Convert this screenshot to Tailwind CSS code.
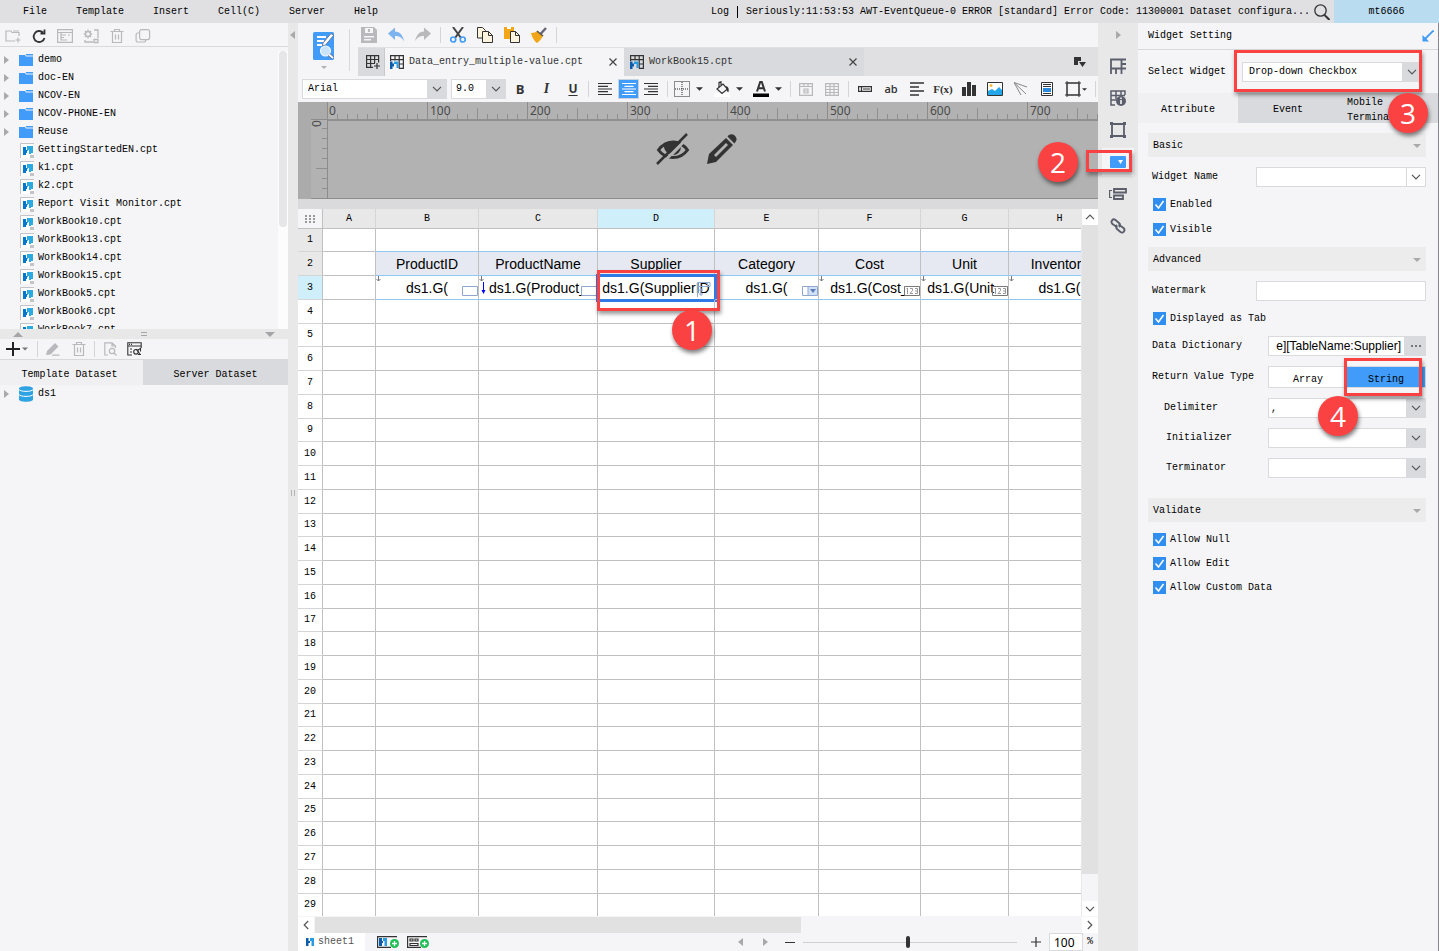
<!DOCTYPE html>
<html lang="en">
<head>
    <meta charset="UTF-8">
    <meta name="viewport" content="width=device-width, initial-scale=1.0">
    <title>Report Designer</title>
    <script src="https://cdn.jsdelivr.net/npm/@tailwindcss/browser@4"></script>
</head>
<body class="h-screen flex flex-col overflow-hidden bg-[#f5f5f7] text-black text-[10px] leading-[18px] font-['Liberation_Mono',monospace]">

    <!-- Shared icons -->
    <svg class="hidden">
        <symbol id="i-cpt" viewBox="0 0 14 15">
            <path d="M0 0h14v15H0z" fill="#fff"/><path d="M.5 15V.5H14" fill="none" stroke="#c4c4c8"/><path d="M10 12h4v3h-4z" fill="#c4c4c8"/>
            <path d="M3 4h3v3h1v3H6v2H3z" fill="#0077cc"/><path d="M7 3h6v7h-2v1H9V7H8v1H7z" fill="#2ba9e1"/>
        </symbol>
        <symbol id="i-grid" viewBox="0 0 14 14">
            <path d="M.6 6V.6h12.800v12.800H9M.6 4.600h12.800M5 .6v5M9.200.6v12.800M9 9h4" fill="none" stroke="#333" stroke-width="1.200"/>
            <path d="M0 6.500h2.500v2H4v3H2.500V14H0z" fill="#0b5cab"/><path d="M4 6.500h4.500V13H6.500V9H4z" fill="#2b9be1"/>
        </symbol>
        <symbol id="i-folder" viewBox="0 0 14 12">
            <path d="M0 1h6l1 1.500h7V12H0z" fill="#419bf9"/><path d="M6.500 0H14v1.500H7.500z" fill="#419bf9"/>
        </symbol>
        <symbol id="i-trash" viewBox="0 0 14 14">
            <path d="M.5 2.500h13M4.500 2.500v-2h5v2M2.500 2.500v11h9v-11M5.500 5.500v5M8.500 5.500v5" fill="none" stroke="#b9b9bd" stroke-width="1.200"/>
        </symbol>
        <symbol id="i-chev" viewBox="0 0 10 6"><path d="M1 .8l4 4 4-4" fill="none" stroke="#555" stroke-width="1.200"/></symbol>
        <symbol id="i-down" viewBox="0 0 8 4"><path d="M0 0h8L4 4z" fill="currentColor"/></symbol>
        <symbol id="i-x" viewBox="0 0 8 8"><path d="M.5.5l7 7M7.500.5l-7 7" stroke="#444" stroke-width="1.200"/></symbol>
        <symbol id="i-right" viewBox="0 0 5 8"><path d="M0 0v8l5-4z" fill="#a9a9ac"/></symbol>
    </svg>

    <!-- Menu bar -->
    <header class="h-[23px] shrink-0 flex items-center bg-[#e0e0e2]">
        <nav class="flex gap-[29px] pl-[23px] whitespace-nowrap">
            <button>File</button>
            <button>Template</button>
            <button>Insert</button>
            <button>Cell(C)</button>
            <button>Server</button>
            <button>Help</button>
        </nav>
        <div class="ml-auto flex items-center whitespace-nowrap">
            <span>Log</span>
            <span class="w-px h-3 bg-black mx-2"></span>
            <span>Seriously:11:53:53 AWT-EventQueue-0 ERROR [standard] Error Code: 11300001 Dataset configura...</span>
        </div>
        <button aria-label="Search" class="ml-1 mr-1"><svg class="w-4 h-4" viewBox="0 0 16 16"><circle cx="6.500" cy="6.500" r="5.700" fill="none" stroke="#333" stroke-width="1.300"/><path d="M10.500 11l5 5" stroke="#333" stroke-width="2"/></svg></button>
        <button class="w-[105px] h-full bg-[#b9dcf1]">mt6666</button>
    </header>

    <div class="flex-1 min-h-0 flex">

        <!-- Left: files and datasets -->
        <aside class="w-72 shrink-0 flex flex-col">
            <div class="h-6 shrink-0 flex items-center gap-[10px] pl-[5px] pt-[2px] border-b border-[#d9d9dc]">
                <button aria-label="New folder"><svg class="w-4 h-4" viewBox="0 0 16 16" fill="none" stroke="#b9b9bd" stroke-width="1.200"><path d="M10 13H1V3h5l1 1.500h7V8M8 3h6M13 9.500v5M10.500 12h5"/></svg></button>
                <button aria-label="Refresh"><svg class="w-4 h-4" viewBox="0 0 16 16" fill="none" stroke="#333" stroke-width="1.800"><path d="M12 4.500A5.500 5.500 0 1 0 13.500 10M13.500 1.500v4H9.500"/></svg></button>
                <button aria-label="Rename"><svg class="w-4 h-4" viewBox="0 0 16 16" fill="none" stroke="#b9b9bd" stroke-width="1.200"><path d="M.6 1.600h14.800v12.800H.6zM.6 4.500h14.800M4 4.500v7.500h6M4 7h5M4 9.500h3M11 7h2"/></svg></button>
                <button aria-label="Settings"><svg class="w-4 h-4" viewBox="0 0 16 16" fill="none" stroke="#b9b9bd" stroke-width="1.300"><circle cx="5" cy="6" r="2.500"/><path d="M5 1.500v2M5 8.500v2M.8 6h2M7.200 6h2M2 3l1.500 1.500M8 3L6.500 4.500M2 9l1.500-1.500M8 9L6.500 7.500M11 2h4v8M2 12v2h8M11 11.500h4v3h-4z"/></svg></button>
                <button aria-label="Delete"><svg class="w-4 h-[14px]"><use href="#i-trash"/></svg></button>
                <button aria-label="Copy"><svg class="w-4 h-4" viewBox="0 0 16 16" fill="none" stroke="#b9b9bd" stroke-width="1.200"><rect x="4.600" y="1.600" width="10" height="10" rx="2"/><path d="M4 5H2.600a1.500 1.500 0 0 0-1.500 1.500v6A1.500 1.500 0 0 0 2.600 14h6.500a1.500 1.500 0 0 0 1.500-1.500V12"/></svg></button>
            </div>

            <div class="h-[282px] shrink-0 flex overflow-hidden">
                <ul id="files" class="flex-1 pt-1 pl-1"></ul>
                <div class="w-[10px] bg-[#fcfcfd] mt-1 px-px"><div class="h-44 rounded bg-[#e6e6e8]"></div></div>
            </div>

            <div class="h-[10px] shrink-0 bg-[#e8e8e8] flex items-center justify-between px-[13px] text-[#a5a5a8]">
                <svg class="w-[10px] h-[5px] rotate-180"><use href="#i-down"/></svg>
                <span class="w-[6px] h-1 border-y border-[#a5a5a8]"></span>
                <svg class="w-[10px] h-[5px]"><use href="#i-down"/></svg>
            </div>

            <div class="h-[21px] shrink-0 flex items-center border-b border-[#d9d9dc] pl-[6px] text-[#777]">
                <button aria-label="Add dataset" class="flex items-center gap-[2px]"><svg class="w-[14px] h-[14px]" viewBox="0 0 14 14"><path d="M7 0v14M0 7h14" stroke="#222" stroke-width="2"/></svg><svg class="w-[6px] h-1"><use href="#i-down"/></svg></button>
                <span class="w-px h-4 bg-[#d5d5d8] ml-[9px] mr-2"></span>
                <button aria-label="Edit"><svg class="w-[14px] h-[14px]" viewBox="0 0 14 14"><path d="M0 13l1-4 8-8 3.500 3.500-8 8zM6 12.500h7.500v1.200H6z" fill="#b9b9bd"/></svg></button>
                <button aria-label="Delete dataset" class="ml-3"><svg class="w-[14px] h-[14px]"><use href="#i-trash"/></svg></button>
                <span class="w-px h-4 bg-[#d5d5d8] ml-2 mr-[9px]"></span>
                <button aria-label="Preview"><svg class="w-[14px] h-[14px]" viewBox="0 0 14 14" fill="none" stroke="#b9b9bd" stroke-width="1.200"><path d="M4 13H.8V.8H8L11.500 4v2M8 .8V4h3.500"/><circle cx="8" cy="9" r="2.700"/><path d="M10 11l2.500 2.500"/></svg></button>
                <button aria-label="Connections" class="ml-[9px]"><svg class="w-[15px] h-[14px]" viewBox="0 0 15 14" fill="none" stroke="#333" stroke-width="1.100"><path d="M5 13H.8V.8h13.400V6M.8 4h13.400M3 7h2M3 10h2M2 2.400h1M4 2.400h1"/><circle cx="9" cy="9.800" r="2.300"/><path d="M9 7l4 5M11 8l2.500-1.500v3M11 12.500h3"/></svg></button>
            </div>
            <div class="h-[25px] shrink-0 flex">
                <button class="w-[143px] pt-1 bg-[#f0f0f2] pr-1">Template Dataset</button>
                <button class="flex-1 pt-1 bg-[#d9dadd]">Server Dataset</button>
            </div>
            <div class="h-[18px] flex items-center pl-1">
                <svg class="w-[5px] h-2"><use href="#i-right"/></svg>
                <svg class="w-[14px] h-4 ml-[10px] mr-[5px]" viewBox="0 0 14 16"><path d="M0 2.500C0-.5 14-.5 14 2.500v11c0 3-14 3-14 0z" fill="#2ea3e3"/><path d="M0 3.500c1 2.500 13 2.500 14 0M0 8.500c1 2.500 13 2.500 14 0" fill="none" stroke="#fff"/></svg>
                ds1
            </div>
        </aside>

        <div class="w-[10px] shrink-0 bg-[#e8e8e8] flex flex-col items-center pt-2 pr-px">
            <svg class="w-[5px] h-2 rotate-180"><use href="#i-right"/></svg>
            <span class="w-1 h-[6px] mt-[451px] border-x border-[#b5b5b8]"></span>
        </div>

        <!-- Centre: designer -->
        <main class="flex-1 min-w-0 flex flex-col relative">
            <div class="flex h-[53px] shrink-0">
                <div class="w-[60px] flex items-center">
                    <button aria-label="Preview report" class="w-[51px] flex flex-col items-center gap-[6px] text-[#b0b0b3]">
                        <svg class="w-[22px] h-[29px]" viewBox="0 0 22 29"><rect y="1" width="21" height="28" rx="1.500" fill="#419bf9"/><path d="M4 6h9M4 10h7M4 14h5" stroke="#fff" stroke-width="1.800"/><path d="M10 12l8-9.500 2.500 2-8 9.500-3 1z" fill="#fff" stroke="#667" stroke-width=".8"/><circle cx="12.500" cy="20" r="5" fill="#c9e3fb" stroke="#eef6fe" stroke-width="1.200"/><path d="M16 23.500l4 3.500" stroke="#667" stroke-width="3"/><path d="M16 23.500l4 3.500" stroke="#fff" stroke-width="1.800"/></svg>
                        <svg class="w-[6px] h-[3px]"><use href="#i-down"/></svg>
                    </button>
                    <span class="w-px h-[42px] bg-[#d9d9dc]"></span>
                </div>
                <div class="flex-1 min-w-0 flex flex-col">
                    <div class="h-[25px] flex items-center gap-[11px] pl-[3px] border-b border-[#dfe0e2]">
                        <button aria-label="Save"><svg class="w-4 h-4" viewBox="0 0 16 16"><path d="M0 0h13l3 3v13H0z" fill="#b9b9bd"/><path d="M4 1h8v5H4zM3 9h10v1.500H3zM3 12h7v1.500H3z" fill="#f5f5f7"/><path d="M7 2h2v3H7z" fill="#b9b9bd"/></svg></button>
                        <button aria-label="Undo"><svg class="w-4 h-4" viewBox="0 0 16 16"><path d="M7 .5v4c5 0 8 4 9 10-2-4-4.500-5.500-9-5.500v4L0 6.500z" fill="#7db3ee"/></svg></button>
                        <button aria-label="Redo"><svg class="w-4 h-4" viewBox="0 0 16 16"><path d="M9 .5v4c-5 0-8 4-9 10 2-4 4.500-5.500 9-5.500v4l7-6.500z" fill="#b9b9bd"/></svg></button>
                        <span class="w-px h-4 -mx-[2px] bg-[#d5d5d8]"></span>
                        <button aria-label="Cut"><svg class="w-4 h-4" viewBox="0 0 16 16" fill="none"><path d="M3 0l8 11M13 0L5 11" stroke="#444" stroke-width="2"/><circle cx="3.200" cy="12.500" r="2.500" stroke="#419bf9" stroke-width="1.700"/><circle cx="12.800" cy="12.500" r="2.500" stroke="#419bf9" stroke-width="1.700"/></svg></button>
                        <button aria-label="Copy cells"><svg class="w-4 h-4" viewBox="0 0 16 16" fill="#fff4dd" stroke="#333"><path d="M.5.5h5l3 3v7.500h-8z"/><path d="M5.500 4.500h6l4 4v7h-10z"/><path d="M11.500 4.500v4h4" fill="none"/></svg></button>
                        <button aria-label="Paste"><svg class="w-4 h-4" viewBox="0 0 16 16"><path d="M0 0h10v12H0z" fill="#f2a516"/><path d="M3 0h4v2H3z" fill="#fff"/><path d="M6.500 4.500h5l4 4v7h-9z" fill="#fff4dd" stroke="#333"/><path d="M11.500 4.500v4h4" fill="none" stroke="#333"/></svg></button>
                        <button aria-label="Format brush"><svg class="w-4 h-4" viewBox="0 0 16 16"><path d="M15 1L9.500 7" stroke="#667" stroke-width="2.500"/><path d="M0 6c3 0 5-1 6-2l6 5c-1 2-4 6-6 7-3-2-5-6-6-10z" fill="#f2a516"/><path d="M6 4l6 5" stroke="#555" stroke-width="1.500"/></svg></button>
                        <span class="w-px h-4 -ml-[2px] bg-[#d5d5d8]"></span>
                    </div>
                    <div class="flex-1 flex bg-[#e0e0e2] text-[#333]">
                        <button aria-label="New template" class="w-[27px] flex items-center justify-center bg-[#d9dadd] border-r border-[#c9c9cc] pl-1"><svg class="w-[14px] h-[14px]" viewBox="0 0 14 14" fill="none" stroke="#333" stroke-width="1.200"><path d="M7 12.400H.6V.6h12v7M.6 4.500h12M.6 8.500H9M4.600.6v11.800M8.600.6V8M11 8v6M8 11h6"/></svg></button>
                        <div class="w-[239px] flex items-center bg-[#f5f5f7] pl-[5px] pr-[7px]">
                            <svg class="w-[14px] h-[14px] mr-[5px]"><use href="#i-grid"/></svg>Data_entry_multiple-value.cpt
                            <button aria-label="Close tab" class="ml-auto"><svg class="w-2 h-2"><use href="#i-x"/></svg></button>
                        </div>
                        <div class="w-[240px] flex items-center bg-[#d9dadd] pl-[6px] pr-[7px]">
                            <svg class="w-[14px] h-[14px] mr-[5px]"><use href="#i-grid"/></svg>WorkBook15.cpt
                            <button aria-label="Close tab" class="ml-auto"><svg class="w-2 h-2"><use href="#i-x"/></svg></button>
                        </div>
                        <button aria-label="Tab list" class="ml-auto mr-3"><svg class="w-3 h-[10px]" viewBox="0 0 12 10" fill="#333"><path d="M0 0h7v4H4v4H0zM5 5h7L8.500 10z"/></svg></button>
                    </div>
                </div>
            </div>

            <!-- Format bar -->
            <div class="h-[26px] shrink-0 flex items-center pl-1 overflow-hidden text-[#333]">
                <div class="relative w-[145px] h-5">
                    <select aria-label="Font" class="appearance-none w-full h-full pl-[5px] bg-white border border-[#d9dadd] text-black"><option>Arial</option></select>
                    <span class="absolute right-0 inset-y-0 w-5 bg-[#d9dadd] flex items-center justify-center pointer-events-none"><svg class="w-[10px] h-[6px]"><use href="#i-chev"/></svg></span>
                </div>
                <div class="relative w-[55px] h-5 ml-1">
                    <select aria-label="Font size" class="appearance-none w-full h-full pl-1 bg-white border border-[#d9dadd] text-black"><option>9.0</option></select>
                    <span class="absolute right-0 inset-y-0 w-5 bg-[#d9dadd] flex items-center justify-center pointer-events-none"><svg class="w-[10px] h-[6px]"><use href="#i-chev"/></svg></span>
                </div>
                <button class="w-[26px] ml-px font-['Open_Sans',sans-serif] font-bold text-[13px]">B</button>
                <button class="w-[27px] font-['Liberation_Serif',serif] font-bold italic text-[14px]">I</button>
                <button class="w-[26px] font-['Open_Sans',sans-serif] font-bold text-[12px] underline underline-offset-2">U</button>
                <span class="w-px h-4 bg-[#d5d5d8] mx-[2px]"></span>
                <button aria-label="Align left" class="w-[27px] flex justify-center pl-px"><svg class="w-[14px] h-3" viewBox="0 0 14 12"><path d="M0 .5h14M0 3.300h10M0 6h14M0 8.700h10M0 11.500h14" stroke="#333" stroke-width="1.200"/></svg></button>
                <button aria-label="Align center" class="w-[21px] h-5 flex items-center justify-center bg-[#419bf9] border border-[#c9d3de]"><svg class="w-[14px] h-3" viewBox="0 0 14 12"><path d="M0 .5h14M2.500 3.300h9M0 6h14M2.500 8.700h9M0 11.500h14" stroke="#fff" stroke-width="1.200"/></svg></button>
                <button aria-label="Align right" class="w-[23px] flex justify-center"><svg class="w-[14px] h-3" viewBox="0 0 14 12"><path d="M0 .5h14M4 3.300h10M0 6h14M4 8.700h10M0 11.500h14" stroke="#333" stroke-width="1.200"/></svg></button>
                <span class="w-px h-4 bg-[#d5d5d8] ml-[5px] mr-[6px]"></span>
                <button aria-label="Borders" class="flex items-center gap-[6px]"><svg class="w-4 h-4" viewBox="0 0 16 16"><path d="M.5.5h15v15H.5zM8 1v14M1 8h14" fill="none" stroke="#222" stroke-dasharray="1 1"/></svg><svg class="w-[7px] h-1"><use href="#i-down"/></svg></button>
                <button aria-label="Fill color" class="flex items-center gap-[6px] ml-[11px]"><svg class="w-4 h-4" viewBox="0 0 16 16"><path d="M0 12h16v4H0z" fill="#fff"/><path d="M3 8l6-5 4.500 5L8 12.500zM5 6V1.500L7 .8V5" fill="#f5f5f7" stroke="#333" stroke-width="1.200"/><path d="M12 5c3 1 3 4 2.500 6-2 0-2-3-2.500-6z" fill="#333"/></svg><svg class="w-[7px] h-1"><use href="#i-down"/></svg></button>
                <button aria-label="Font color" class="flex items-center gap-[6px] ml-[10px]"><svg class="w-4 h-4" viewBox="0 0 16 16"><path d="M0 12.500h16V16H0z" fill="#000"/><path d="M4 10.500L7.200 1h1.600L12 10.500M5.300 7.300h5.400" fill="none" stroke="#333" stroke-width="2"/></svg><svg class="w-[7px] h-1"><use href="#i-down"/></svg></button>
                <span class="w-px h-4 bg-[#d5d5d8] mx-2"></span>
                <button aria-label="Merge cells"><svg class="w-[14px] h-[13px]" viewBox="0 0 14 13" fill="none" stroke="#b9b9bd" stroke-width="1.200"><path d="M.6.6h12.800v11.800H.6zM.6 3.500h12.800M5 .6v3M9 .6v3M5 10V6h4v4zM5 8h4"/></svg></button>
                <button aria-label="Unmerge cells" class="ml-3"><svg class="w-[14px] h-[13px]" viewBox="0 0 14 13" fill="none" stroke="#b9b9bd" stroke-width="1.200"><path d="M.6.6h12.800v11.800H.6zM.6 3.500h12.800M.6 6.500h12.800M.6 9.500h12.800M5 .6v11.800M9 .6v11.800"/></svg></button>
                <span class="w-px h-4 bg-[#d5d5d8] ml-[9px] mr-[3px]"></span>
                <button aria-label="Text widget" class="w-[26px] flex justify-center"><svg class="w-[14px] h-[6px]" viewBox="0 0 14 6" fill="none" stroke="#333" stroke-width="1.200"><path d="M.6.6h12.800v4.800H.6zM3.500.6v4.800M5 3h7"/></svg></button>
                <button class="w-[26px] font-['Open_Sans',sans-serif] font-semibold text-[11px]">ab</button>
                <button aria-label="Rich text" class="w-[26px] flex justify-center"><svg class="w-[14px] h-[14px]" viewBox="0 0 14 14"><path d="M0 1h14M0 5h9M0 9h14M0 13h9" stroke="#333" stroke-width="1.700"/></svg></button>
                <button class="w-[26px] font-['Liberation_Serif',serif] font-bold text-[11px]">F(x)</button>
                <button aria-label="Chart" class="w-[26px] flex justify-center"><svg class="w-[14px] h-[14px]" viewBox="0 0 14 14" fill="#333"><path d="M0 5h4v9H0zM5 0h4v14H5zM10 3h4v11h-4z"/></svg></button>
                <button aria-label="Image" class="w-[26px] flex justify-center"><svg class="w-4 h-[14px]" viewBox="0 0 16 14"><path d="M.5.5h15v13H.5z" fill="#fff" stroke="#333"/><path d="M1 9l4-2 3 2 4-4 3 3v5H1z" fill="#23a6ea"/><circle cx="4" cy="3.500" r="1.500" fill="#f7b93e"/></svg></button>
                <button aria-label="Slash header" class="w-[26px] flex justify-center"><svg class="w-[14px] h-[14px]" viewBox="0 0 14 14"><path d="M13 5L0 .5 12 12M0 .5L7 13" fill="none" stroke="#888"/></svg></button>
                <button aria-label="Sub report" class="w-[26px] flex justify-center"><svg class="w-3 h-[14px]" viewBox="0 0 12 14"><path d="M.5.5h11v13H.5z" fill="#fff" stroke="#333"/><path d="M2 2.500h8M2 4.500h8M2 11.500h8" stroke="#333"/><path d="M2 6h8v4H2z" fill="#2b8be0"/></svg></button>
                <button aria-label="Float element" class="flex items-center gap-px ml-[5px]"><svg class="w-4 h-4" viewBox="0 0 16 16"><path d="M2 2h12v12H2zM2 0v16M14 0v16M0 2h16M0 14h16" fill="none" stroke="#333"/></svg><svg class="w-[5px] h-[3px]"><use href="#i-down"/></svg></button>
                <span class="w-px h-4 bg-[#d5d5d8] ml-2"></span>
            </div>

            <!-- Ruler and parameter pane -->
            <div class="h-[97px] shrink-0 flex flex-col bg-[#b2b2b2] border-b border-[#8c8c8c]">
                <div class="h-[17px] shrink-0 flex">
                    <div class="w-[29px] bg-[#ababab]"></div>
                    <svg class="flex-1 h-full" font-family="'Noto Sans', sans-serif" font-size="12" fill="#4a4a4a">
                        <defs>
                            <pattern id="t10" width="10" height="17" patternUnits="userSpaceOnUse"><path d="M.5 12v5" stroke="#8f8f8f"/></pattern>
                            <pattern id="t50" width="50" height="17" patternUnits="userSpaceOnUse"><path d="M.5 6v11" stroke="#8f8f8f"/></pattern>
                            <pattern id="t100" width="100" height="17" patternUnits="userSpaceOnUse"><path d="M.5 0v17" stroke="#8c8c8c"/></pattern>
                        </defs>
                        <rect width="100%" height="17" fill="url(#t10)"/><rect width="100%" height="17" fill="url(#t50)"/><rect width="100%" height="17" fill="url(#t100)"/>
                        <text x="2" y="13">0</text><text x="103" y="13">100</text><text x="203" y="13">200</text><text x="303" y="13">300</text><text x="403" y="13">400</text><text x="503" y="13">500</text><text x="603" y="13">600</text><text x="703" y="13">700</text>
                    </svg>
                </div>
                <div class="flex-1 flex">
                    <div class="w-[13px] bg-[#ababab]"></div>
                    <svg class="w-[17px] h-full" font-family="'Noto Sans', sans-serif" font-size="12" fill="#4a4a4a">
                        <path d="M0 .5h17" stroke="#8c8c8c"/><path d="M16.500 0v80" stroke="#8c8c8c"/>
                        <path d="M11 9.500h5M11 19.500h5M11 29.500h5M11 39.500h5M5 49.500h11M11 59.500h5M11 69.500h5" stroke="#8f8f8f"/>
                        <text transform="translate(10 8) rotate(-90)">0</text>
                    </svg>
                    <div class="flex-1 flex justify-center gap-4 pt-3 pr-8 border-t-2 border-[#909090]">
                        <button aria-label="Hide pane" class="self-start"><svg class="w-[34px] h-8" viewBox="0 0 34 32"><path d="M2.500 17c7-10 22-10 29 0-7 10-22 10-29 0z" fill="none" stroke="#333" stroke-width="3"/><path d="M8 10c6-3.500 13-3.500 18 0l-11 11c-6-1-8-7-7-11z" fill="#333"/><path d="M25 14a8 8 0 0 1-8 8z" fill="#333"/><path d="M3.500 33L33.500 3" stroke="#b2b2b2" stroke-width="3"/><path d="M1 31L31 1" stroke="#333" stroke-width="2.500"/></svg></button>
                        <button aria-label="Edit pane" class="self-start"><svg class="w-8 h-8" viewBox="0 0 32 32"><path d="M1 31l2-10L20 5l7 7-17 17z" fill="#333"/><path d="M8 22L20 10l2 2L10 24z" fill="#b2b2b2"/><path d="M21.500 3.500c2-3 6-3 8 0s1 4-1 7z" fill="#333"/></svg></button>
                    </div>
                </div>
            </div>
            <div class="h-[10px] shrink-0 bg-[#dadadd]"></div>

            <!-- Sheet -->
            <div class="flex-1 min-h-0 flex">
                <div class="flex-1 min-w-0 overflow-hidden bg-white">
                    <table class="w-[813px] table-fixed border-separate border-spacing-0 text-center">
                        <colgroup><col class="w-[25px]"><col class="w-[53px]"><col class="w-[103px]"><col class="w-[119px]"><col class="w-[117px]"><col class="w-[104px]"><col class="w-[102px]"><col class="w-[88px]"><col class="w-[102px]"></colgroup>
                        <thead id="cols"></thead>
                        <tbody id="rows"></tbody>
                    </table>
                </div>
                <div class="w-[17px] shrink-0 flex flex-col border-l border-[#e8e8ea]">
                    <button aria-label="Scroll up" class="h-4 bg-white flex items-center justify-center"><svg class="w-[10px] h-[6px] rotate-180"><use href="#i-chev"/></svg></button>
                    <div class="h-[649px] bg-[#e1e1e1]"></div>
                    <button aria-label="Scroll down" class="h-[15px] mt-auto bg-white flex items-center justify-center"><svg class="w-[10px] h-[6px]"><use href="#i-chev"/></svg></button>
                </div>
            </div>
            <div class="h-4 mt-px shrink-0 flex">
                <button aria-label="Scroll left" class="w-4 mr-px bg-white flex items-center justify-center"><svg class="w-[10px] h-[6px] rotate-90"><use href="#i-chev"/></svg></button>
                <div class="w-[486px] bg-[#e1e1e1]"></div>
                <button aria-label="Scroll right" class="w-4 ml-auto bg-white flex items-center justify-center"><svg class="w-[10px] h-[6px] -rotate-90"><use href="#i-chev"/></svg></button>
            </div>
            <div class="h-[18px] shrink-0 flex items-center">
                <button class="w-[67px] h-full bg-white flex items-center pl-2 gap-1 text-[#555]"><svg class="w-2 h-2" viewBox="0 0 8 8"><path d="M0 0h2.500v3H4v2H2.500v3H0z" fill="#0b5cab"/><path d="M4 0h4v8H5.500V3H4z" fill="#2b9be1"/></svg>sheet1</button>
                <button aria-label="Add sheet" class="ml-3"><svg class="w-[22px] h-3" viewBox="0 0 22 12"><path d="M20 .6H.6v10.800H14" fill="none" stroke="#333" stroke-width="1.200"/><path d="M2 2h3v3h1v2H5v3H2z" fill="#0b5cab"/><path d="M6 2h4v8H7.500V5H6z" fill="#2b9be1"/><circle cx="17.500" cy="7.500" r="4.500" fill="#1fbf55"/><path d="M17.500 5v5M15 7.500h5" stroke="#fff" stroke-width="1.300"/></svg></button>
                <button aria-label="Add form sheet" class="ml-2"><svg class="w-[22px] h-3" viewBox="0 0 22 12"><path d="M20 .6H.6v10.800H14M3 3h3v2H3zM8 3h3v2H8zM3 7.500h8v2H3z" fill="none" stroke="#333" stroke-width="1.200"/><circle cx="17.500" cy="7.500" r="4.500" fill="#1fbf55"/><path d="M17.500 5v5M15 7.500h5" stroke="#fff" stroke-width="1.300"/></svg></button>
                <div class="ml-auto flex items-center h-full">
                    <svg class="w-[5px] h-2 rotate-180"><use href="#i-right"/></svg>
                    <svg class="w-[5px] h-2 ml-5"><use href="#i-right"/></svg>
                    <button aria-label="Zoom out" class="w-[10px] h-px bg-[#333] ml-[17px] mr-2"></button>
                    <label class="w-[214px] h-3 flex items-center">
                        <input type="range" aria-label="Zoom" min="0" max="200" value="98" class="appearance-none w-full h-px bg-[#cfcfd2] [&::-webkit-slider-thumb]:appearance-none [&::-webkit-slider-thumb]:w-1 [&::-webkit-slider-thumb]:h-3 [&::-webkit-slider-thumb]:rounded-sm [&::-webkit-slider-thumb]:bg-[#333]">
                    </label>
                    <button aria-label="Zoom in" class="ml-[14px]"><svg class="w-[10px] h-[10px]" viewBox="0 0 10 10"><path d="M5 0v10M0 5h10" stroke="#333" stroke-width="1.200"/></svg></button>
                    <input type="text" aria-label="Zoom percent" value="100" class="w-[34px] h-full ml-2 pl-1 bg-white border border-[#d9dadd] text-[12px] font-['Noto_Sans',sans-serif]">
                    <span class="w-[15px] pl-1">%</span>
                </div>
            </div>

            <!-- Callout 1 -->
            <div class="absolute z-10 left-[299px] top-[247px] w-[123px] h-[41px] border-[3px] border-[#fb4242] shadow-[1px_3px_4px_rgba(0,0,0,0.4)]"></div>
            <div class="absolute z-10 left-[374px] top-[287px] size-10 rounded-full bg-[#fb4242] text-white text-[28px] leading-10 text-center font-['Open_Sans',sans-serif] shadow-[1px_3px_4px_rgba(0,0,0,0.5)]">1</div>
        </main>

        <!-- Panel switcher -->
        <nav class="relative w-10 shrink-0 bg-[#e8e8e8] flex flex-col items-center">
            <svg class="w-[5px] h-2 mt-2"><use href="#i-right"/></svg>
            <button aria-label="Cell element" class="mt-[19px]"><svg class="w-4 h-4" viewBox="0 0 16 16" fill="none" stroke="#5b5e6b" stroke-width="1.800"><path d="M16 1.500H1V16M1 10.500h15M11.500 1v15M11.500 6H16M6 11v5"/></svg></button>
            <button aria-label="Cell attributes" class="mt-4"><svg class="w-4 h-4" viewBox="0 0 16 16" fill="none" stroke="#5b5e6b" stroke-width="1.500"><path d="M15 5V1H1v14h4M1 5.500h14M6 1v10M1 10h4M11 1v5"/><circle cx="11" cy="11" r="5" fill="#5b5e6b" stroke="none"/><path d="M11 7.500v1.500M11 10v4" stroke="#fff"/></svg></button>
            <button aria-label="Float element settings" class="mt-4"><svg class="w-4 h-4" viewBox="0 0 16 16" fill="none" stroke="#5b5e6b" stroke-width="1.800"><path d="M2 2h12v12H2z"/><path d="M0 0h3v3H0zM13 0h3v3h-3zM0 13h3v3H0zM13 13h3v3h-3z" fill="#5b5e6b" stroke="none"/></svg></button>
            <button aria-label="Widget settings" class="mt-[10px] w-8 h-7 bg-[#f5f5f7] flex items-center justify-center"><svg class="w-4 h-3" viewBox="0 0 16 12"><rect width="16" height="12" rx="1" fill="#419bf9"/><path d="M8 4h5l-2.500 4z" fill="#fff"/></svg></button>
            <button aria-label="Conditions" class="mt-3"><svg class="w-[18px] h-3" viewBox="0 0 18 12" fill="none" stroke="#5b5e6b" stroke-width="1.800"><path d="M5 1h12v3.500H5zM5 7.500h9V11H5z"/><path d="M3 2.500H.6v7H3" stroke-width="1.200"/></svg></button>
            <button aria-label="Hyperlink" class="mt-[18px]"><svg class="w-4 h-4" viewBox="0 0 16 16" fill="none" stroke="#5b5e6b" stroke-width="1.900"><path d="M7.500 9.500L2.500 6C0 3.500 3 0 5.500 2L9 5c1.300 1.300 1 3 0 4M8.500 6.500l5 3.500c2.500 2.500-.5 6-3 4L7 11c-1.300-1.300-1-3 0-4"/></svg></button>

            <!-- Callout 2 -->
            <div class="absolute z-10 -left-3 top-[127px] w-[46px] h-[22px] border-[3px] border-[#fb4242] shadow-[1px_3px_4px_rgba(0,0,0,0.4)]"></div>
            <div class="absolute z-10 -left-[60px] top-[119px] size-10 rounded-full bg-[#fb4242] text-white text-[28px] leading-10 text-center font-['Open_Sans',sans-serif] shadow-[1px_3px_4px_rgba(0,0,0,0.5)]">2</div>
        </nav>

        <!-- Right: widget settings -->
        <section class="relative w-[301px] shrink-0 border-r border-[#85858d]">
            <div class="h-[27px] flex items-center justify-between pl-[10px] pr-1 border-b border-[#d9d9dc]">
                <h2>Widget Setting</h2>
                <button aria-label="Detach panel"><svg class="w-3 h-3" viewBox="0 0 12 12"><path d="M11.500.5L3 9" stroke="#419bf9" stroke-width="1.800"/><path d="M.5 5v6.500H7z" fill="#419bf9"/></svg></button>
            </div>
            <div class="h-[43px] flex items-center pl-[10px]">
                <label for="widget" class="w-[94px]">Select Widget</label>
                <div class="relative w-[180px] h-5">
                    <select id="widget" class="appearance-none w-full h-full pl-[6px] bg-white border border-[#d9dadd]"><option>Drop-down Checkbox</option></select>
                    <span class="absolute right-0 inset-y-0 w-5 bg-[#d9dadd] flex items-center justify-center pointer-events-none"><svg class="w-[10px] h-[6px]"><use href="#i-chev"/></svg></span>
                </div>
            </div>
            <div class="h-[30px] flex bg-[#d9dadd]">
                <button class="w-[100px] pt-1 bg-[#f0f0f2]">Attribute</button>
                <button class="w-[100px] pt-1">Event</button>
                <button class="w-[100px] pl-[9px] pt-[2px] text-left leading-[15px]">Mobile<br>Terminal</button>
            </div>

            <div class="flex flex-col gap-[10px] pl-[10px] pr-3 pt-[10px]">
                <h3 class="h-6 flex items-center justify-between px-[5px] pt-[2px] bg-[#ececec]">Basic <svg class="w-2 h-1 text-[#aaa]"><use href="#i-down"/></svg></h3>
                <div class="h-5 flex items-center pl-1">
                    <label for="wname" class="w-[104px]">Widget Name</label>
                    <div class="relative flex-1 h-full">
                        <input id="wname" type="text" class="w-full h-full px-1 bg-white border border-[#d9dadd]">
                        <button aria-label="Pick name" class="absolute right-0 inset-y-0 w-5 border border-[#d9dadd] flex items-center justify-center"><svg class="w-[10px] h-[6px]"><use href="#i-chev"/></svg></button>
                    </div>
                </div>
                <label class="h-[15px] flex items-center gap-1 pl-[5px]"><input type="checkbox" checked class="appearance-none size-[13px] bg-[#2f8ef0]"><svg class="absolute w-[13px] h-[13px] pointer-events-none" viewBox="0 0 13 13"><path d="M2.500 6.500l3 3.500 5-7" fill="none" stroke="#fff" stroke-width="1.600"/></svg>Enabled</label>
                <label class="h-[15px] flex items-center gap-1 pl-[5px]"><input type="checkbox" checked class="appearance-none size-[13px] bg-[#2f8ef0]"><svg class="absolute w-[13px] h-[13px] pointer-events-none" viewBox="0 0 13 13"><path d="M2.500 6.500l3 3.500 5-7" fill="none" stroke="#fff" stroke-width="1.600"/></svg>Visible</label>

                <h3 class="h-6 flex items-center justify-between px-[5px] pt-[2px] bg-[#ececec]">Advanced <svg class="w-2 h-1 text-[#aaa]"><use href="#i-down"/></svg></h3>
                <div class="h-5 flex items-center pl-1">
                    <label for="watermark" class="w-[104px]">Watermark</label>
                    <input id="watermark" type="text" class="flex-1 h-full px-1 bg-white border border-[#d9dadd]">
                </div>
                <label class="h-[15px] flex items-center gap-1 pl-[5px]"><input type="checkbox" checked class="appearance-none size-[13px] bg-[#2f8ef0]"><svg class="absolute w-[13px] h-[13px] pointer-events-none" viewBox="0 0 13 13"><path d="M2.500 6.500l3 3.500 5-7" fill="none" stroke="#fff" stroke-width="1.600"/></svg>Displayed as Tab</label>
                <div class="h-5 flex items-center pl-1">
                    <label for="dict" class="w-[116px]">Data Dictionary</label>
                    <div class="w-[137px] h-full bg-white border border-[#d9dadd] overflow-hidden flex justify-end px-[3px]">
                        <input id="dict" type="text" value="e][TableName:Supplier]" class="w-full text-right text-[12px] font-['Liberation_Sans',sans-serif]">
                    </div>
                    <button aria-label="Browse dictionary" class="flex-1 h-full bg-[#d9dadd] flex items-center justify-center gap-[2px]"><i class="size-[2px] bg-[#777]"></i><i class="size-[2px] bg-[#777]"></i><i class="size-[2px] bg-[#777]"></i></button>
                </div>
                <div class="h-[22px] flex items-center pl-1">
                    <span class="w-[116px]">Return Value Type</span>
                    <div class="flex-1 h-full flex border border-[#d9dadd]">
                        <button class="flex-1 pt-1 bg-white">Array</button>
                        <button class="flex-1 pt-1 bg-[#419bf9]">String</button>
                    </div>
                </div>
                <div class="h-5 flex items-center pl-4">
                    <label for="delim" class="w-[104px]">Delimiter</label>
                    <div class="relative flex-1 h-full">
                        <input id="delim" type="text" value="," class="w-full h-full px-[2px] bg-white border border-[#d9dadd]">
                        <button aria-label="Pick delimiter" class="absolute right-0 inset-y-0 w-5 bg-[#d9dadd] flex items-center justify-center"><svg class="w-[10px] h-[6px]"><use href="#i-chev"/></svg></button>
                    </div>
                </div>
                <div class="h-5 flex items-center pl-[18px]">
                    <label for="init" class="w-[102px]">Initializer</label>
                    <div class="relative flex-1 h-full">
                        <input id="init" type="text" class="w-full h-full px-[2px] bg-white border border-[#d9dadd]">
                        <button aria-label="Pick initializer" class="absolute right-0 inset-y-0 w-5 bg-[#d9dadd] flex items-center justify-center"><svg class="w-[10px] h-[6px]"><use href="#i-chev"/></svg></button>
                    </div>
                </div>
                <div class="h-5 flex items-center pl-[18px]">
                    <label for="term" class="w-[102px]">Terminator</label>
                    <div class="relative flex-1 h-full">
                        <input id="term" type="text" class="w-full h-full px-[2px] bg-white border border-[#d9dadd]">
                        <button aria-label="Pick terminator" class="absolute right-0 inset-y-0 w-5 bg-[#d9dadd] flex items-center justify-center"><svg class="w-[10px] h-[6px]"><use href="#i-chev"/></svg></button>
                    </div>
                </div>

                <h3 class="h-6 mt-[10px] flex items-center justify-between px-[5px] pt-[2px] bg-[#ececec]">Validate <svg class="w-2 h-1 text-[#aaa]"><use href="#i-down"/></svg></h3>
                <div class="flex flex-col gap-[9px]">
                    <label class="h-[15px] flex items-center gap-1 pl-[5px]"><input type="checkbox" checked class="appearance-none size-[13px] bg-[#2f8ef0]"><svg class="absolute w-[13px] h-[13px] pointer-events-none" viewBox="0 0 13 13"><path d="M2.500 6.500l3 3.500 5-7" fill="none" stroke="#fff" stroke-width="1.600"/></svg>Allow Null</label>
                    <label class="h-[15px] flex items-center gap-1 pl-[5px]"><input type="checkbox" checked class="appearance-none size-[13px] bg-[#2f8ef0]"><svg class="absolute w-[13px] h-[13px] pointer-events-none" viewBox="0 0 13 13"><path d="M2.500 6.500l3 3.500 5-7" fill="none" stroke="#fff" stroke-width="1.600"/></svg>Allow Edit</label>
                    <label class="h-[15px] flex items-center gap-1 pl-[5px]"><input type="checkbox" checked class="appearance-none size-[13px] bg-[#2f8ef0]"><svg class="absolute w-[13px] h-[13px] pointer-events-none" viewBox="0 0 13 13"><path d="M2.500 6.500l3 3.500 5-7" fill="none" stroke="#fff" stroke-width="1.600"/></svg>Allow Custom Data</label>
                </div>
            </div>

            <!-- Callouts 3 and 4 -->
            <div class="absolute z-10 left-24 top-[27px] w-[188px] h-[42px] border-[3px] border-[#fb4242] shadow-[1px_3px_4px_rgba(0,0,0,0.4)]"></div>
            <div class="absolute z-10 left-[250px] top-[70px] size-10 rounded-full bg-[#fb4242] text-white text-[28px] leading-10 text-center font-['Open_Sans',sans-serif] shadow-[1px_3px_4px_rgba(0,0,0,0.5)]">3</div>
            <div class="absolute z-10 left-[206px] top-[335px] w-[78px] h-[38px] border-[3px] border-[#fb4242] shadow-[1px_3px_4px_rgba(0,0,0,0.4)]"></div>
            <div class="absolute z-10 left-[180px] top-[373px] size-10 rounded-full bg-[#fb4242] text-white text-[28px] leading-10 text-center font-['Open_Sans',sans-serif] shadow-[1px_3px_4px_rgba(0,0,0,0.5)]">4</div>
        </section>
    </div>

    <script>
        // File tree
        const folders = ['demo', 'doc-EN', 'NCOV-EN', 'NCOV-PHONE-EN', 'Reuse'];
        const files = ['GettingStartedEN', 'k1', 'k2', 'Report Visit Monitor', 'WorkBook10', 'WorkBook13', 'WorkBook14', 'WorkBook15', 'WorkBook5', 'WorkBook6', 'WorkBook7'];
        document.getElementById('files').innerHTML =
            folders.map(f => `<li class="h-[18px] flex items-center"><svg class="w-[5px] h-2"><use href="#i-right"/></svg><svg class="w-[14px] h-3 ml-[10px] mr-[5px]"><use href="#i-folder"/></svg>${f}</li>`).join('') +
            files.map(f => `<li class="h-[18px] flex items-center pl-4"><svg class="w-[14px] h-[15px] mr-1"><use href="#i-cpt"/></svg>${f}.cpt</li>`).join('');

        // Column headers
        document.getElementById('cols').innerHTML = '<tr><th class="h-5 bg-[#f5f5f7] border-r border-b border-[#c0c0c0]"><svg class="w-[10px] h-2 mx-auto" viewBox="0 0 10 8" fill="#999"><path d="M0 0h2v2H0zM4 0h2v2H4zM8 0h2v2H8zM0 3h2v2H0zM4 3h2v2H4zM8 3h2v2H8zM0 6h2v2H0zM4 6h2v2H4zM8 6h2v2H8z"/></svg></th>' +
            'ABCDEFGH'.split('').map(c => `<th class="h-5 font-normal leading-[18px] border-r border-b border-r-[#d5d5d8] border-b-[#c0c0c0] ${c === 'D' ? 'bg-[#cfeffa]' : 'bg-[#e8e8e8]'}">${c}</th>`).join('') + '</tr>';

        // Small widget markers drawn in the corner of data cells
        const box = '<svg class="absolute right-0 bottom-[3px] w-4 h-[10px]" viewBox="0 0 16 10"><path d="M.5.5h15v9H.5z" fill="none" stroke="#8fa6cf"/></svg>';
        const num = '<svg class="absolute right-0 bottom-[3px] w-4 h-[10px]" viewBox="0 0 16 10" fill="none"><path d="M.5.5h15v9H.5z" stroke="#777"/><path d="M2.500 3l1-1v6M6 2.500h2.500v2L6 7.500h3M11 2.500h2.500v5H11M11 5h2.500" stroke="#999"/></svg>';
        const combo = '<svg class="absolute right-0 bottom-[3px] w-4 h-[10px]" viewBox="0 0 16 10"><path d="M6 .5h9.500v9H6z" fill="#cfe0f7"/><path d="M.5.5h15v9H.5zM6 .5v9" fill="none" stroke="#8fa6cf"/><path d="M8 3h6l-3 4z" fill="#5b7db8"/></svg>';
        const tree = '<svg class="absolute right-[3px] bottom-[2px] w-[14px] h-[15px]" viewBox="0 0 14 15"><path d="M.5 15V.5h10v4H.5M10 .5h3v4h-3M3 7h2v2H3zM3 11h2v2H3z" fill="none" stroke="#8fa6cf"/></svg>';
        const arrow = '<svg class="absolute left-0 top-0 w-[5px] h-[6px]" viewBox="0 0 5 6"><path d="M2.500 0v5M.5 3l2 2 2-2" fill="none" stroke="#777"/></svg>';
        const blue = '<svg class="absolute left-[2px] top-[6px] w-[5px] h-3" viewBox="0 0 5 12"><path d="M2.500 0v9" stroke="#00f"/><path d="M.5 8h4l-2 4z" fill="#00f"/></svg>';
        const heads = ['', 'ProductID', 'ProductName', 'Supplier', 'Category', 'Cost', 'Unit', 'Inventory'];
        const data = ['', 'ds1.G(' + arrow + box, 'ds1.G(Product_' + arrow + blue + box, 'ds1.G(SupplierID' + tree, 'ds1.G(' + combo, 'ds1.G(Cost_' + arrow + num, 'ds1.G(Unit_' + arrow + num, 'ds1.G(' + arrow];

        let html = '';
        for (let r = 1; r <= 29; r++) {
            const h = r % 4 === 1 ? 'h-[23px]' : 'h-6';
            const side = r === 3 ? 'bg-[#cfeffa]' : r < 3 ? 'bg-[#e8e8e8]' : 'bg-white';
            html += `<tr class="${h}"><th class="p-0 font-normal leading-[18px] border-r border-b border-r-[#c0c0c0] border-b-[#d5d5d8] ${side}">${r}</th>`;
            for (let c = 0; c < 8; c++) {
                const line = r <= 3 && c > 0 ? 'border-b-[#90c8f5]' : 'border-b-[#c0c0c0]';
                const fill = r === 2 && c > 0 ? 'bg-[#e6e9f1]' : '';
                const sel = r === 3 && c === 3 ? 'outline-[3px] -outline-offset-1 outline-[#2f7be5]' : '';
                const text = r === 2 ? heads[c] : r === 3 ? data[c] : '';
                html += `<td class="relative p-0 border-r border-b border-r-[#c0c0c0] ${line} ${fill} ${sel} whitespace-nowrap text-[14px] leading-[18px] font-['Liberation_Sans',sans-serif]">${text}</td>`;
            }
            html += '</tr>';
        }
        document.getElementById('rows').innerHTML = html;
    </script>
</body>
</html>
